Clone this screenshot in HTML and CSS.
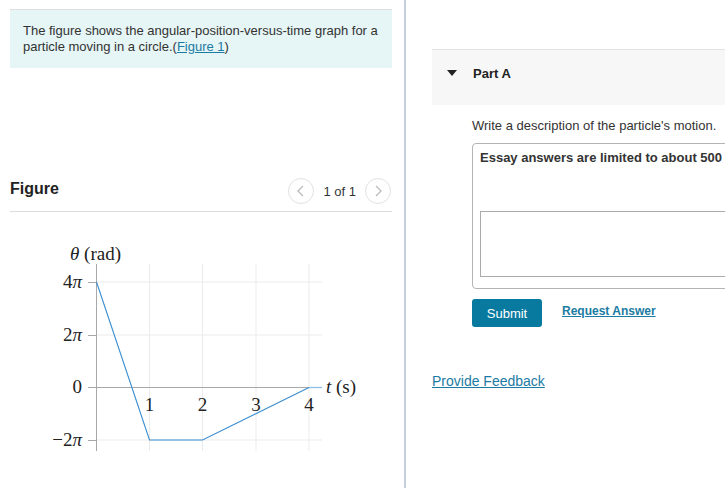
FILE: index.html
```html
<!DOCTYPE html>
<html>
<head>
<meta charset="utf-8">
<link rel="stylesheet" href="styles.css">
</head>
<body>
<div class="page">
  <div class="left">
    <div class="info">The figure shows the angular-position-versus-time graph for a particle moving in a circle.(<a class="link" href="#">Figure 1</a>)</div>
    <div class="fig-head">
      <span class="fig-title">Figure</span>
      <div class="pager">
        <span class="circ"><svg width="10" height="12" viewBox="0 0 10 12"><path d="M7 1 L2 6 L7 11" fill="none" stroke="#bbb" stroke-width="1.3"/></svg></span>
        <span class="count">1 of 1</span>
        <span class="circ"><svg width="10" height="12" viewBox="0 0 10 12"><path d="M3 1 L8 6 L3 11" fill="none" stroke="#bbb" stroke-width="1.3"/></svg></span>
      </div>
    </div>
    <svg class="graph" width="382" height="260" viewBox="10 211 382 260">
      <g stroke="#ebebeb" stroke-width="1">
        <line x1="96" y1="283" x2="322" y2="283"/>
        <line x1="96" y1="336" x2="322" y2="336"/>
        <line x1="96" y1="441" x2="322" y2="441"/>
        <line x1="149.5" y1="265" x2="149.5" y2="452"/>
        <line x1="202.5" y1="265" x2="202.5" y2="452"/>
        <line x1="256" y1="265" x2="256" y2="452"/>
        <line x1="309" y1="265" x2="309" y2="452"/>
      </g>
      <g stroke="#a8a8a8" stroke-width="1">
        <line x1="96.5" y1="265" x2="96.5" y2="452"/>
        <line x1="96" y1="388.5" x2="322" y2="388.5"/>
        <line x1="88" y1="283.5" x2="96" y2="283.5"/>
        <line x1="88" y1="336.5" x2="96" y2="336.5"/>
        <line x1="88" y1="388.5" x2="96" y2="388.5"/>
        <line x1="88" y1="441.5" x2="96" y2="441.5"/>
      </g>
      <polyline points="96.5,283 149.5,441 202.5,441 309,388.5" fill="none" stroke="#3b8dd0" stroke-width="1.1"/>
      <line x1="309" y1="388.5" x2="322" y2="388.5" stroke="#8cc0e8" stroke-width="1.3"/>
      <g class="gt">
        <text x="70" y="261"><tspan font-style="italic">θ</tspan> (rad)</text>
        <text x="82" y="289" text-anchor="end">4<tspan font-style="italic">π</tspan></text>
        <text x="82" y="342" text-anchor="end">2<tspan font-style="italic">π</tspan></text>
        <text x="82" y="394" text-anchor="end">0</text>
        <text x="82" y="447" text-anchor="end">−2<tspan font-style="italic">π</tspan></text>
        <text x="149.5" y="412" text-anchor="middle">1</text>
        <text x="202.5" y="412" text-anchor="middle">2</text>
        <text x="256" y="412" text-anchor="middle">3</text>
        <text x="309" y="412" text-anchor="middle">4</text>
        <text x="326" y="394"><tspan font-style="italic">t</tspan> (s)</text>
      </g>
    </svg>
  </div>
  <div class="divider"></div>
  <div class="right">
    <div class="part-head">
      <span class="tri"></span>
      <span class="part-title">Part A</span>
    </div>
    <div class="part-body">
      <p class="prompt">Write a description of the particle's motion.</p>
      <div class="essay">
        <div class="essay-note">Essay answers are limited to about 500 words (3800 characters maximum, including spaces).</div>
        <div class="textarea"></div>
      </div>
      <div class="actions">
        <button class="submit">Submit</button>
        <a class="req" href="#">Request Answer</a>
      </div>
    </div>
    <a class="feedback" href="#">Provide Feedback</a>
  </div>
</div>
</body>
</html>
```
FILE: styles.css
```css
html, body {
  margin: 0;
  padding: 0;
  overflow: hidden;
  background: #fff;
}
body {
  font-family: "Liberation Sans", Arial, sans-serif;
  color: #333;
  width: 725px;
  height: 488px;
}
.page {
  display: flex;
  height: 488px;
}
.left {
  width: 382px;
  flex: none;
  padding: 0 12px 0 10px;
}
.info {
  margin-top: 9px;
  border-top: 1px solid #dedede;
  background: #e6f5f5;
  padding: 13px 13px 13px 13px;
  font-size: 13px;
  line-height: 16px;
  height: 32px;
}
.link {
  color: #1b7ba3;
  text-decoration: underline;
}
.fig-head {
  margin-top: 110px;
  display: flex;
  align-items: center;
  justify-content: space-between;
  padding-bottom: 7px;
  border-bottom: 1px solid #dcdcdc;
}
.fig-title {
  font-weight: bold;
  font-size: 16px;
  color: #222;
  position: relative;
  top: -2px;
}
.pager {
  display: flex;
  align-items: center;
  gap: 9px;
  margin-right: 1px;
}
.circ {
  width: 24px;
  height: 24px;
  border: 1px solid #e2e2e2;
  border-radius: 50%;
  display: flex;
  align-items: center;
  justify-content: center;
}
.count {
  font-size: 13px;
  color: #333;
}
.graph {
  display: block;
  margin-top: -2px;
}
.gt text {
  font-family: "Liberation Serif", "Times New Roman", serif;
  font-size: 19px;
  fill: #222;
}
.divider {
  width: 2px;
  flex: none;
  background: #c4cfdc;
}
.right {
  flex: none;
  width: 400px;
  padding-top: 49px;
}
.part-head {
  margin-left: 26px;
  border-top: 1px solid #e3e3e3;
  background: #f7f7f7;
  height: 55px;
  display: flex;
  align-items: center;
  padding-left: 15px;
}
.tri {
  width: 0;
  height: 0;
  border-left: 5px solid transparent;
  border-right: 5px solid transparent;
  border-top: 6px solid #222;
  margin-right: 16px;
  margin-top: -9px;
}
.part-title {
  font-weight: bold;
  font-size: 13px;
  color: #222;
  margin-top: -8px;
}
.part-body {
  margin-left: 66px;
}
.prompt {
  margin: 13px 0 0 0;
  font-size: 13px;
  line-height: 16px;
}
.essay {
  margin-top: 9px;
  width: 330px;
  border: 1px solid #b4b4b4;
  border-radius: 4px;
  padding: 6px 0 10px 7px;
  height: 128px;
  box-sizing: content-box;
}
.essay-note {
  font-weight: bold;
  font-size: 13px;
  line-height: 16px;
  color: #333;
  white-space: nowrap;
  overflow: hidden;
}
.textarea {
  margin-top: 45px;
  height: 64px;
  border: 1px solid #aaa;
}
.actions {
  margin-top: 10px;
  display: flex;
  align-items: center;
  gap: 20px;
}
.submit {
  width: 70px;
  height: 28px;
  background: #097a9f;
  border: none;
  border-radius: 3px;
  color: #fff;
  font-family: "Liberation Sans", Arial, sans-serif;
  font-size: 13px;
  padding: 0;
}
.req {
  font-weight: bold;
  font-size: 12px;
  color: #1b7ba3;
  text-decoration: underline;
  position: relative;
  top: -2px;
}
.feedback {
  display: inline-block;
  margin-left: 26px;
  margin-top: 46px;
  font-size: 14px;
  color: #1b7ba3;
  text-decoration: underline;
}
```
